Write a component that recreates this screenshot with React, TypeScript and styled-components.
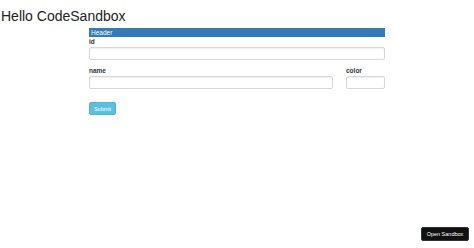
import React from "react";
import styled, { createGlobalStyle } from "styled-components";

const Global = createGlobalStyle`
  html, body { margin: 0; padding: 0; background: #fff; }
  body { font-family: "Liberation Sans", Arial, sans-serif; color: #333; }
  * { box-sizing: border-box; }
`;

const Page = styled.div`
  width: 474px;
  height: 248px;
  display: flex;
  flex-direction: column;
`;

const Title = styled.h1`
  margin: 8px 0 0 0;
  font-size: 14px;
  line-height: 16px;
  font-weight: 400;
  color: #222;
  padding-left: 1px;
`;

const Form = styled.form`
  margin: 4px 0 0 89px;
  width: 296px;
  display: flex;
  flex-direction: column;
`;

const HeaderBar = styled.div`
  height: 9px;
  background: #337ab7;
  color: #fff;
  font-size: 6.5px;
  line-height: 9px;
  padding-left: 2px;
`;

const Label = styled.label`
  display: block;
  font-size: 6.5px;
  font-weight: 700;
  line-height: 8px;
  height: 8px;
  color: #333;
  margin-top: 1px;
  margin-bottom: 1px;
`;

const Input = styled.input`
  display: block;
  width: 100%;
  height: 13px;
  border: 1px solid #d6d6d6;
  border-radius: 2px;
  box-shadow: inset 0 1px 1px rgba(0, 0, 0, 0.06);
  padding: 0 3px;
  font-size: 6px;
  outline: none;
`;

const Row = styled.div`
  display: flex;
  gap: 13px;
  margin-top: 6px;
`;

const Field = styled.div<{ $w?: number; $grow?: boolean }>`
  display: flex;
  flex-direction: column;
  ${(p) => (p.$grow ? "flex: 1;" : "")}
  ${(p) => (p.$w ? `width: ${p.$w}px;` : "")}
`;

const Submit = styled.button`
  margin-top: 13px;
  width: 27px;
  height: 13px;
  background: #5bc0de;
  border: 1px solid #46b8da;
  border-radius: 2px;
  color: #fff;
  font-family: "Liberation Sans", Arial, sans-serif;
  font-size: 5.5px;
  padding: 0;
  cursor: pointer;
  display: block;
`;

const OpenSandbox = styled.a`
  position: fixed;
  left: 421px;
  top: 227px;
  width: 48px;
  height: 14px;
  background: #111;
  color: #fff;
  border-radius: 2px;
  border: 1px solid #333;
  font-size: 5.5px;
  line-height: 12px;
  text-align: center;
  text-decoration: none;
`;

export default function App() {
  return (
    <Page>
      <Global />
      <Title>Hello CodeSandbox</Title>
      <Form onSubmit={(e) => e.preventDefault()}>
        <HeaderBar>Header</HeaderBar>
        <Field>
          <Label>id</Label>
          <Input />
        </Field>
        <Row>
          <Field $grow>
            <Label>name</Label>
            <Input />
          </Field>
          <Field $w={39}>
            <Label>color</Label>
            <Input />
          </Field>
        </Row>
        <div>
          <Submit type="submit">Submit</Submit>
        </div>
      </Form>
      <OpenSandbox href="#">Open Sandbox</OpenSandbox>
    </Page>
  );
}
